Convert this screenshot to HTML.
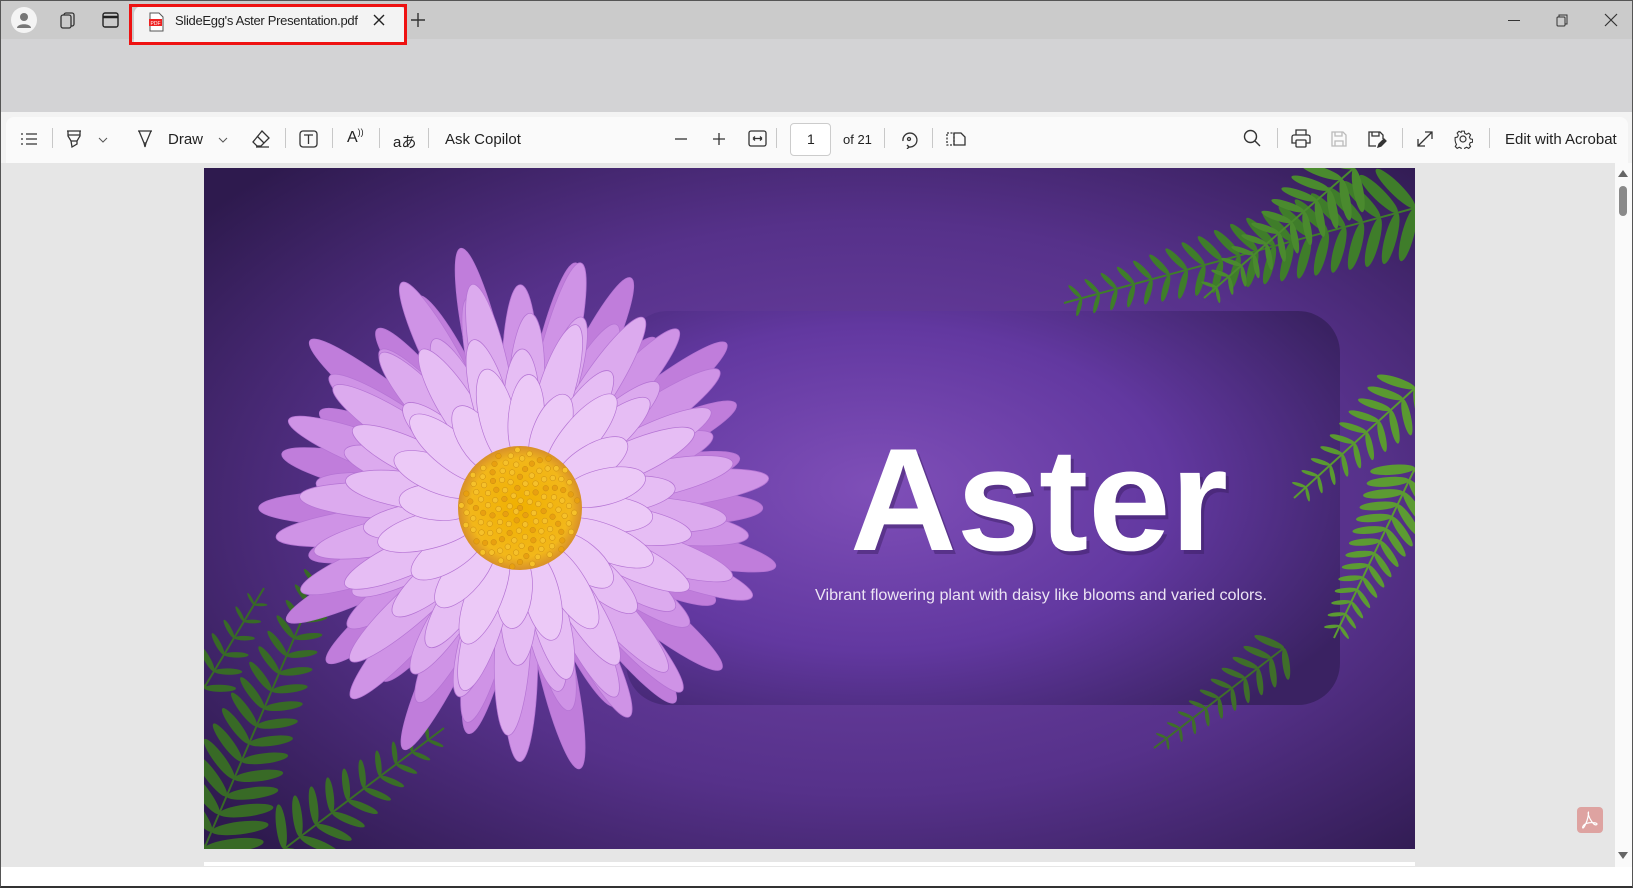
<!DOCTYPE html>
<html><head><meta charset="utf-8"><style>
*{margin:0;padding:0;box-sizing:border-box}
body{width:1635px;height:889px;overflow:hidden;background:#fff;font-family:"Liberation Sans",sans-serif;position:relative}
.abs{position:absolute}
#frame{left:0;top:0;width:1633px;height:888px;border:1px solid #555;border-bottom:2px solid #333}
#title{left:1px;top:1px;width:1631px;height:38px;background:#cbcbcb}
#grey{left:1px;top:39px;width:1631px;height:73px;background:#d3d3d5}
#tb{left:1px;top:112px;width:1631px;height:52px;background:#f3f3f3}
#tbi{left:6px;top:117px;width:1622px;height:46px;background:#fafafa;border-radius:8px 8px 0 0}
#view{left:1px;top:163px;width:1631px;height:704px;background:#e6e6e6}
#scroll{left:1615px;top:163px;width:17px;height:704px;background:#fafafa}
.t{position:absolute;font-size:15px;color:#222;top:131px}
.sep{position:absolute;top:128px;width:1px;height:20px;background:#c8c8c8}
svg.i{position:absolute}
</style></head><body>
<div class="abs" id="title"></div>
<div class="abs" id="grey"></div>
<div class="abs" id="tb"></div>
<div class="abs" id="tbi"></div>
<div class="abs" id="view"></div>
<div class="abs" id="scroll"></div>
<div class="abs" style="left:1619px;top:186px;width:8px;height:30px;background:#8a8a8a;border-radius:4px"></div>
<div class="abs" style="left:1618px;top:170px;width:0;height:0;border-left:5px solid transparent;border-right:5px solid transparent;border-bottom:7px solid #666"></div>
<div class="abs" style="left:1618px;top:852px;width:0;height:0;border-left:5px solid transparent;border-right:5px solid transparent;border-top:7px solid #666"></div>

<!-- title bar -->
<div class="abs" style="left:11px;top:7px;width:26px;height:26px;border-radius:50%;background:#f4f4f4"></div>
<svg class="i" style="left:14px;top:10px" width="20" height="20"><circle cx="10" cy="7" r="4" fill="#777"/><path d="M3 18c0-5 14-5 14 0z" fill="#777"/></svg>
<svg class="i" style="left:57px;top:10px" width="20" height="20" fill="none" stroke="#333" stroke-width="1.3"><rect x="7" y="3" width="10" height="13" rx="2"/><rect x="4" y="5" width="10" height="13" rx="2" fill="#cbcbcb"/></svg>
<svg class="i" style="left:101px;top:11px" width="20" height="18" fill="none" stroke="#222" stroke-width="1.4"><rect x="2" y="2" width="15" height="14" rx="2"/><path d="M2 6h15" stroke-width="2.5"/></svg>
<div class="abs" style="left:134px;top:6px;width:272px;height:36px;background:#f3f3f3;border-radius:8px 8px 0 0"></div>
<div class="abs" style="left:129px;top:4px;width:278px;height:41px;border:3px solid #e11"></div>
<svg class="i" style="left:148px;top:12px" width="16" height="20"><path d="M2 1h9l4 4v14H2z" fill="#fff" stroke="#555"/><rect x="1" y="7" width="13" height="7" fill="#e22"/><text x="2.5" y="13" font-size="5" fill="#fff" font-family="Liberation Sans">PDF</text></svg>
<div class="abs" style="left:175px;top:13px;font-size:13px;color:#222;letter-spacing:-0.3px">SlideEgg's Aster Presentation.pdf</div>
<svg class="i" style="left:373px;top:14px" width="12" height="12" stroke="#222" stroke-width="1.4"><path d="M1 1l10 10M11 1L1 11"/></svg>
<svg class="i" style="left:410px;top:12px" width="16" height="16" stroke="#333" stroke-width="1.4"><path d="M8 1v14M1 8h14"/></svg>
<svg class="i" style="left:1507px;top:14px" width="14" height="12" stroke="#333"><path d="M1 6.5h12"/></svg>
<svg class="i" style="left:1555px;top:13px" width="14" height="14" fill="none" stroke="#333"><rect x="2" y="4" width="8" height="9" rx="1"/><path d="M4 4V2h8v9h-2"/></svg>
<svg class="i" style="left:1604px;top:13px" width="14" height="14" stroke="#333" stroke-width="1.2"><path d="M1 1l12 12M13 1L1 13"/></svg>

<!-- toolbar -->
<svg class="i" style="left:20px;top:131px" width="18" height="16" stroke="#333" stroke-width="1.3"><path d="M1 3h2M6 3h11M1 8h2M6 8h11M1 13h2M6 13h11"/></svg>
<div class="sep" style="left:52px"></div>
<svg class="i" style="left:65px;top:129px" width="18" height="20" fill="none" stroke="#333" stroke-width="1.3"><path d="M2 2h14M3 6h12M3 2v5l3 5h6l3-5V2M6 12l1 6 5-3v-3"/></svg>
<svg class="i" style="left:98px;top:136px" width="10" height="8" fill="none" stroke="#555"><path d="M1 2l4 4 4-4"/></svg>
<svg class="i" style="left:136px;top:129px" width="18" height="20" fill="none" stroke="#333" stroke-width="1.3"><path d="M2 2h14M3 2l5 12h2l5-12M8 14l1 4 1-4"/></svg>
<div class="t" style="left:168px">Draw</div>
<svg class="i" style="left:218px;top:136px" width="10" height="8" fill="none" stroke="#555"><path d="M1 2l4 4 4-4"/></svg>
<svg class="i" style="left:251px;top:129px" width="20" height="20" fill="none" stroke="#333" stroke-width="1.3"><path d="M11 2l7 7-8 8H6l-4-4zM6 7l7 7M5 18h13"/></svg>
<div class="sep" style="left:285px"></div>
<svg class="i" style="left:299px;top:130px" width="19" height="18" fill="none" stroke="#333" stroke-width="1.3"><rect x="1" y="1" width="17" height="16" rx="3"/><path d="M5 5h9M9.5 5v9"/></svg>
<div class="sep" style="left:332px"></div>
<div class="t" style="left:347px;font-size:16px;top:129px">A<span style="font-size:9px;position:relative;top:-7px">))</span></div>
<div class="sep" style="left:379px"></div>
<div class="t" style="left:393px;font-family:'Liberation Sans','Noto Sans CJK JP',sans-serif">aあ</div>
<div class="sep" style="left:428px"></div>
<div class="t" style="left:445px">Ask Copilot</div>
<svg class="i" style="left:674px;top:133px" width="14" height="12" stroke="#333" stroke-width="1.3"><path d="M1 6h12"/></svg>
<svg class="i" style="left:712px;top:132px" width="14" height="14" stroke="#333" stroke-width="1.3"><path d="M7 1v12M1 7h12"/></svg>
<svg class="i" style="left:748px;top:130px" width="19" height="17" fill="none" stroke="#333" stroke-width="1.3"><rect x="1" y="1" width="17" height="15" rx="2"/><path d="M5 8.5h9M5 8.5l2-2M5 8.5l2 2M14 8.5l-2-2M14 8.5l-2 2"/></svg>
<div class="sep" style="left:776px"></div>
<div class="abs" style="left:790px;top:123px;width:41px;height:33px;background:#fff;border:1px solid #ccc;border-radius:4px"></div>
<div class="t" style="left:807px;font-size:14px">1</div>
<div class="t" style="left:843px;font-size:13px;top:132px">of 21</div>
<div class="sep" style="left:884px"></div>
<svg class="i" style="left:899px;top:129px" width="20" height="20" fill="none" stroke="#333" stroke-width="1.3"><path d="M4 12a7 7 0 1 1 6 6M10 18l-2 -2M10 18l-2 2"/><circle cx="10" cy="10" r="1.5"/></svg>
<div class="sep" style="left:932px"></div>
<svg class="i" style="left:946px;top:131px" width="20" height="16" fill="none" stroke="#333" stroke-width="1.3"><path d="M1 2h7v12H1z" stroke-dasharray="2 1.5"/><path d="M8 2h7l4 4v8H8z"/></svg>
<svg class="i" style="left:1243px;top:129px" width="18" height="18" fill="none" stroke="#333" stroke-width="1.4"><circle cx="7.5" cy="7.5" r="6"/><path d="M12 12l5 5"/></svg>
<div class="sep" style="left:1277px"></div>
<svg class="i" style="left:1291px;top:129px" width="20" height="19" fill="none" stroke="#333" stroke-width="1.3"><path d="M5 6V1h10v5M3 6h14a2 2 0 0 1 2 2v6h-4M5 14H1V8a2 2 0 0 1 2-2"/><rect x="5" y="11" width="10" height="7" rx="1"/></svg>
<svg class="i" style="left:1330px;top:130px" width="18" height="18" fill="none" stroke="#bbb" stroke-width="1.3"><path d="M2 2h11l3 3v11H2z"/><path d="M5 2v4h7V2M5 16v-5h8v5"/></svg>
<svg class="i" style="left:1367px;top:130px" width="20" height="18" fill="none" stroke="#333" stroke-width="1.3"><path d="M9 16H2V2h11l3 3v4"/><path d="M5 2v4h7V2"/><path d="M11 17l1-3 5-5 2 2-5 5z" fill="#333"/></svg>
<div class="sep" style="left:1402px"></div>
<svg class="i" style="left:1416px;top:130px" width="18" height="18" fill="none" stroke="#333" stroke-width="1.3"><path d="M2 16L16 2M9 2h7v7M2 9v7h7"/></svg>
<svg class="i" style="left:1453px;top:129px" width="20" height="20" fill="none" stroke="#333" stroke-width="1.2"><circle cx="10" cy="10" r="3"/><path d="M8.5 1.5h3l.5 2.5 2 1 2.3-1.3 2 2-1.3 2.3 1 2 2.5.5v3l-2.5.5-1 2 1.3 2.3-2 2-2.3-1.3-2 1-.5 2.5h-3l-.5-2.5-2-1-2.3 1.3-2-2 1.3-2.3-1-2L1.5 11.5v-3L4 8l1-2-1.3-2.3 2-2L8 3z" transform="scale(.92) translate(.8 .8)"/></svg>
<div class="sep" style="left:1489px"></div>
<div class="t" style="left:1505px">Edit with Acrobat</div>

<!-- slide -->
<div class="abs" style="left:204px;top:862px;width:1211px;height:4px;background:#fff"></div>
<svg class="abs" style="left:204px;top:168px" width="1211" height="681" viewBox="0 0 1211 681">
<defs>
<radialGradient id="bg" cx="0.55" cy="0.5" r="0.7"><stop offset="0" stop-color="#7446ac"/><stop offset="0.6" stop-color="#56318a"/><stop offset="1" stop-color="#2e1a4e"/></radialGradient>
<radialGradient id="pn" cx="0.35" cy="0.45" r="0.75"><stop offset="0" stop-color="#7f4fb8"/><stop offset="0.55" stop-color="#6238a0"/><stop offset="1" stop-color="#3a2262"/></radialGradient>
<radialGradient id="ctr" cx="0.5" cy="0.5" r="0.5"><stop offset="0" stop-color="#f0b000"/><stop offset="0.8" stop-color="#f2b71a"/><stop offset="1" stop-color="#d8902a"/></radialGradient>
</defs>
<rect width="1211" height="681" fill="url(#bg)"/>
<rect x="422" y="143" width="714" height="394" rx="42" fill="url(#pn)"/>
<g id="fern"></g>
<g id="fl" transform="translate(316 340)"></g>
<circle cx="316" cy="340" r="62" fill="url(#ctr)"/>
<g id="dots" transform="translate(316 340)"></g>
<text x="646" y="382" font-family="Liberation Sans" font-weight="bold" font-size="146" fill="#3a1d60" opacity=".45" transform="translate(3 4)" textLength="378" lengthAdjust="spacingAndGlyphs">Aster</text>
<text x="646" y="382" font-family="Liberation Sans" font-weight="bold" font-size="146" fill="#fff" textLength="378" lengthAdjust="spacingAndGlyphs">Aster</text>
<text x="611" y="432" font-family="Liberation Sans" font-size="15.5" fill="#ece4f4" textLength="452" lengthAdjust="spacingAndGlyphs">Vibrant flowering plant with daisy like blooms and varied colors.</text>
</svg>
<div class="abs" style="left:1577px;top:807px;width:26px;height:26px;background:#dea3a1;border-radius:4px"></div>
<svg class="i" style="left:1580px;top:810px" width="20" height="20" fill="none" stroke="#fff" stroke-width="1.2"><path d="M9 2c-2 0 0 6 3 10s5 3 5 2-4-2-9-1-6 5-5 5 4-6 5-11 0-5 1-5z"/></svg>
<script>
var NS="http://www.w3.org/2000/svg";
function el(t,a,p){var e=document.createElementNS(NS,t);for(var k in a)e.setAttribute(k,a[k]);p.appendChild(e);return e;}
var fl=document.getElementById('fl');
var layers=[[262,28,0,"#c07ddb"],[248,26,7,"#cf93e6"],[222,24,3,"#dcaaee"],[185,22,9,"#e6bdf4"],[140,20,4,"#ecc9f7"]];
layers.forEach(function(L){for(var i=0;i<L[1];i++){var a=i*360/L[1]+L[2];var r=L[0]*(0.9+0.1*Math.sin(i*2.3));
el('ellipse',{cx:r/2+25,cy:0,rx:r/2-18,ry:18,fill:L[3],stroke:"#b574d4","stroke-width":0.7,transform:"rotate("+a+")"},fl);}});
var d=document.getElementById('dots');
for(var i=0;i<130;i++){var r=5.2*Math.sqrt(i),a=i*137.5*Math.PI/180;el('circle',{cx:r*Math.cos(a),cy:r*Math.sin(a),r:2.8,fill:i%3?"#f6c12a":"#e8a010",stroke:"#c98a10","stroke-width":0.5},d);}
var fg=document.getElementById('fern');
function fern(x0,y0,x1,y1,n,len,col){var dx=x1-x0,dy=y1-y0,ang=Math.atan2(dy,dx)*180/Math.PI;
el('path',{d:"M"+x0+" "+y0+"L"+x1+" "+y1,stroke:col,"stroke-width":2},fg);
for(var i=0;i<n;i++){var t=i/n,x=x0+dx*t,y=y0+dy*t,l=len*(1-t*0.7);
[-60,60].forEach(function(s){el('ellipse',{cx:x,cy:y,rx:l/2,ry:l/9,fill:col,transform:"rotate("+(ang+s)+" "+x+" "+y+") translate("+(l/2)+" 0)"},fg);});}}
fern(1211,40,860,135,20,55,"#3f7d2a");
fern(1150,0,1000,130,12,45,"#4a8a2e");
fern(1211,220,1090,330,10,40,"#5a9a30");
fern(1211,300,1130,470,14,45,"#5c9b32");
fern(1080,480,950,580,10,32,"#3f6e2a");
fern(0,681,120,400,16,60,"#386a26");
fern(80,681,240,560,10,45,"#3a6e27");
fern(0,520,60,420,6,32,"#386a26");
</script>
<div class="abs" id="frame"></div>
</body></html>
